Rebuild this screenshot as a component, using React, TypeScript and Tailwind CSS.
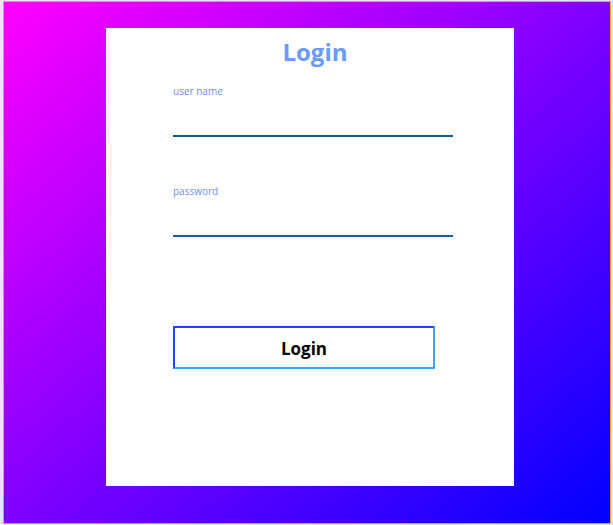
export default function App() {
  return (
    <div className="w-[613px] h-[525px] bg-[#e6e6f8] pl-[3px] pt-[1px] overflow-hidden" style={{ fontFamily: '"Open Sans", "Noto Sans", sans-serif' }}>
      <div className="w-[608px] h-[523px] border border-solid border-[#ffa500] bg-[linear-gradient(to_bottom_right,#ff00ff,#0000ff)] pl-[102px] pt-[26px]">
        <div className="w-[408px] h-[458px] bg-white flex flex-col">
          <div className="mt-[8px] text-center pl-[10px] text-[24px] leading-[32px] font-bold text-[#6a9afe]">Login</div>
          <div className="ml-[67px] mt-[16px] w-[280px] flex flex-col">
            <label className="text-[10px] leading-[14px] text-[#6f8cff]">user name</label>
            <input className="h-[39px] border-b-2 border-[#135e9f] outline-none" type="text" />
            <label className="mt-[47px] text-[10px] leading-[14px] text-[#6f8cff]">password</label>
            <input className="h-[39px] border-b-2 border-[#135e9f] outline-none" type="password" />
          </div>
          <button className="ml-[67px] mt-[89px] w-[262px] h-[43px] pt-[2px] border-2 border-t-[#2440ff] border-l-[#2440ff] border-r-[#3aa6ff] border-b-[#3aa6ff] bg-white text-[17px] font-bold text-black">
            Login
          </button>
        </div>
      </div>
    </div>
  );
}
